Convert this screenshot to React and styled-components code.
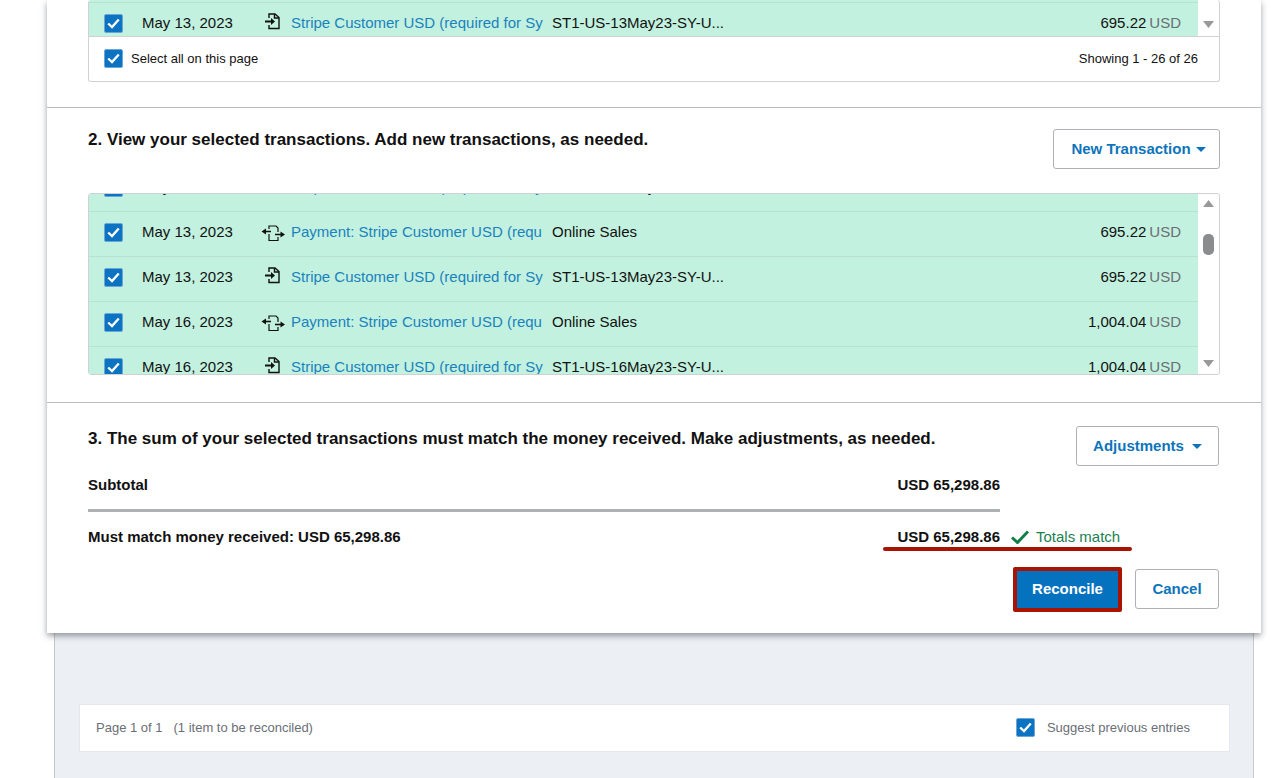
import React from "react";
import styled, { createGlobalStyle } from "styled-components";

const GlobalStyle = createGlobalStyle`
  html, body {
    margin: 0;
    height: 778px;
    overflow: hidden;
    background: #fff;
    font-family: "Liberation Sans", Arial, sans-serif;
    font-size: 15px;
    color: #111;
  }
`;

const Page = styled.div`
  position: relative;
  height: 778px;
  overflow: hidden;
`;

const BackPanel = styled.div`
  box-sizing: border-box;
  height: 778px;
  margin: 0 34px 0 54px;
  padding: 704px 23px 0 24px;
  background: #ecf0f5;
  border-left: 1px solid #c5c8cc;
  border-right: 1px solid #c5c8cc;
`;

const PagerCard = styled.div`
  box-sizing: border-box;
  height: 48px;
  display: flex;
  align-items: center;
  padding: 0 39px 2px 16px;
  background: #fff;
  border: 1px solid #e4e8ec;
  color: #6a6e75;
  font-size: 13px;
`;

const PagerCount = styled.span`
  margin-right: 11px;
`;

const SuggestLabel = styled.span`
  margin-left: auto;
  display: flex;
  align-items: center;
  gap: 12px;
`;

const Modal = styled.div`
  position: absolute;
  top: 0;
  left: 47px;
  width: 1214px;
  height: 633px;
  background: #fff;
  box-shadow: 0 3px 6px rgba(60, 66, 75, 0.5);
`;

const Section = styled.section`
  box-sizing: border-box;
  height: ${(p) => p.$height}px;
  padding: ${(p) => p.$padding};
  border-bottom: ${(p) => (p.$last ? "none" : "1px solid #b9bcc0")};
`;

const ListBox = styled.div`
  box-sizing: border-box;
  width: 1132px;
  height: ${(p) => p.$height}px;
  margin-top: ${(p) => p.$top || 0}px;
  border: 1px solid #cfd2d5;
  ${(p) => p.$open && "border-top: none;"}
  border-radius: 3px;
  overflow: hidden;
  background: #fff;
`;

const ListBody = styled.div`
  display: flex;
  height: ${(p) => p.$height}px;
  ${(p) => p.$ruled && "border-bottom: 1px solid #cfd2d5;"}
`;

const Rows = styled.div`
  flex: 1;
  min-width: 0;
  overflow: hidden;
  background: #c3f1df;
`;

const RowsInner = styled.div`
  margin-top: ${(p) => p.$shift}px;
  ${(p) => p.$ruled && "border-top: 1px solid #b9e1d2;"}
`;

const Row = styled.div`
  box-sizing: border-box;
  height: 45px;
  display: flex;
  padding: 11px 0 0 15px;
  border-bottom: 1px solid #b9e1d2;
  line-height: 17px;
`;

const DateCell = styled.span`
  width: 91px;
  margin-left: 19px;
  white-space: nowrap;
`;

const IconCell = styled.span`
  width: 58px;
  margin-top: ${(p) => p.$nudge}px;
  padding-left: ${(p) => p.$indent}px;
  box-sizing: border-box;
  display: flex;
  align-items: center;
  height: 17px;
  margin-bottom: ${(p) => -p.$nudge}px;
`;

const TypeLink = styled.span`
  width: 252px;
  overflow: hidden;
  white-space: nowrap;
  color: #1a82bd;
`;

const RefCell = styled.span`
  margin-left: 9px;
  width: 180px;
  white-space: nowrap;
  overflow: hidden;
`;

const Amount = styled.span`
  margin-left: auto;
  padding-right: 17px;
  white-space: nowrap;
`;

const Currency = styled.span`
  margin-left: 3px;
  color: #6a6e75;
`;

const ScrollTrack = styled.div`
  width: 21px;
  flex: none;
  display: flex;
  flex-direction: column;
  align-items: center;
  padding: ${(p) => (p.$short ? "0 0 8px" : "6px 0 7px")};
  justify-content: space-between;
  box-sizing: border-box;
  position: relative;
`;

const ScrollThumb = styled.div`
  position: absolute;
  top: 40px;
  left: 5px;
  width: 11px;
  height: 21px;
  border-radius: 5px;
  background: #8a8c8e;
`;

const ListFooter = styled.div`
  box-sizing: border-box;
  height: 44px;
  display: flex;
  align-items: center;
  justify-content: space-between;
  padding: 0 21px 2px 15px;
  font-size: 13px;
`;

const SelectAll = styled.span`
  display: flex;
  align-items: center;
  gap: 8px;
`;

const HeadRow = styled.div`
  display: flex;
  justify-content: space-between;
  align-items: flex-start;
`;

const Heading = styled.h2`
  margin: ${(p) => p.$top}px 0 0;
  font-size: 17px;
  line-height: 20px;
  font-weight: 700;
`;

const Button = styled.button`
  box-sizing: border-box;
  height: 40px;
  width: ${(p) => p.$width}px;
  display: flex;
  align-items: center;
  justify-content: center;
  gap: ${(p) => p.$gap || 0}px;
  padding: 0 0 2px ${(p) => p.$inset || 0}px;
  background: #fff;
  border: 1px solid #aeb1b5;
  border-radius: 3px;
  color: #0d74bb;
  font: 700 15px "Liberation Sans", Arial, sans-serif;
`;

const CancelButton = styled(Button)`
  margin-top: 2px;
`;

const Caret = styled.span`
  width: 0;
  height: 0;
  margin-top: 2px;
  border-left: 5px solid transparent;
  border-right: 5px solid transparent;
  border-top: 5px solid currentColor;
`;

const TotalRow = styled.div`
  width: 912px;
  display: flex;
  justify-content: space-between;
  font-weight: 700;
  line-height: 20px;
  ${(p) => p.$rule && "padding-bottom: 14px; border-bottom: 3px solid #aeb0b3;"}
  margin-top: ${(p) => p.$top}px;
  position: relative;
`;

const MatchNote = styled.span`
  position: absolute;
  left: 923px;
  top: 0;
  display: flex;
  align-items: center;
  gap: 7px;
  white-space: nowrap;
  font-weight: 400;
  color: #1b8051;
`;

const RedLine = styled.div`
  position: absolute;
  left: 836px;
  top: 547px;
  width: 249px;
  height: 4px;
  border-radius: 2px;
  background: #a81400;
`;

const Actions = styled.div`
  position: absolute;
  right: 42px;
  top: 567px;
  display: flex;
  align-items: flex-start;
  gap: 13px;
`;

const PrimaryButton = styled.button`
  box-sizing: border-box;
  width: 109px;
  height: 45px;
  padding: 0 0 2px;
  background: #0572c0;
  border: 4px solid #a81400;
  border-radius: 2px;
  color: #fff;
  font: 700 15px "Liberation Sans", Arial, sans-serif;
`;

const Box = styled.span`
  box-sizing: border-box;
  width: 19px;
  height: 19px;
  flex: none;
  display: inline-flex;
  align-items: center;
  justify-content: center;
  background: #0b73c1;
  border: 1px solid #6aa6d6;
  border-radius: 2px;
`;

const Check = () => (
  <Box>
    <svg width="13" height="11" viewBox="0 0 13 11" fill="none">
      <path d="M1.2 5.5 L5 9 L11.8 1.5" stroke="#fff" strokeWidth="2.3" />
    </svg>
  </Box>
);

const Triangle = ({ down }) => (
  <svg width="11" height="7" viewBox="0 0 11 7">
    <path d={down ? "M0 0 H11 L5.5 7 Z" : "M0 7 H11 L5.5 0 Z"} fill="#999" />
  </svg>
);

const DepositIcon = () => (
  <svg width="15" height="17" viewBox="0 0 15 17" fill="none" stroke="#111" strokeWidth="1.4">
    <path d="M4 5 V1 H10 L14 4.5 V15.5 H4 V12" />
    <path d="M9.5 1 V5 H14" />
    <path d="M0 8.5 H7" strokeWidth="2" />
    <path d="M6 5 L10 8.5 L6 12 Z" fill="#111" stroke="none" />
  </svg>
);

const PaymentIcon = () => (
  <svg width="24" height="17" viewBox="0 0 24 17" fill="none" stroke="#111" strokeWidth="1.2">
    <path d="M4 6.5 H10" strokeWidth="1.6" />
    <path d="M5 3.5 L0.5 6.5 L5 9.5 Z" fill="#111" stroke="none" />
    <path d="M8 4 V1 H15 L17 3 V7" />
    <path d="M8 9 V15.5 H17 V12" />
    <path d="M14 9.5 H21" strokeWidth="1.6" />
    <path d="M19.5 6.5 L24 9.5 L19.5 12.5 Z" fill="#111" stroke="none" />
  </svg>
);

const GreenTick = () => (
  <svg width="18" height="14" viewBox="0 0 18 14" fill="none">
    <path d="M1 7.5 L6.5 12.5 L17 1.5" stroke="#0f7f45" strokeWidth="3" />
  </svg>
);

const TxRow = ({ date, kind, link, reference, amount }) => (
  <Row>
    <Check />
    <DateCell>{date}</DateCell>
    <IconCell $indent={kind === "payment" ? 28 : 32} $nudge={kind === "payment" ? 2 : -1}>
      {kind === "payment" ? <PaymentIcon /> : <DepositIcon />}
    </IconCell>
    <TypeLink>{link}</TypeLink>
    <RefCell>{reference}</RefCell>
    <Amount>
      {amount}
      <Currency>USD</Currency>
    </Amount>
  </Row>
);

const STRIPE = "Stripe Customer USD (required for Sy";
const PAYMENT = "Payment: Stripe Customer USD (requ";

const selected = [
  { date: "May 12, 2023", kind: "deposit", link: STRIPE, reference: "ST1-US-12May23-SY-U...", amount: "512.18" },
  { date: "May 13, 2023", kind: "payment", link: PAYMENT, reference: "Online Sales", amount: "695.22" },
  { date: "May 13, 2023", kind: "deposit", link: STRIPE, reference: "ST1-US-13May23-SY-U...", amount: "695.22" },
  { date: "May 16, 2023", kind: "payment", link: PAYMENT, reference: "Online Sales", amount: "1,004.04" },
  { date: "May 16, 2023", kind: "deposit", link: STRIPE, reference: "ST1-US-16May23-SY-U...", amount: "1,004.04" },
];

export default function App() {
  return (
    <Page>
      <GlobalStyle />
      <BackPanel>
        <PagerCard>
          <PagerCount>Page 1 of 1</PagerCount>
          <span>(1 item to be reconciled)</span>
          <SuggestLabel>
            <Check />
            Suggest previous entries
          </SuggestLabel>
        </PagerCard>
      </BackPanel>

      <Modal>
        <Section $height={108} $padding="0 41px">
          <ListBox $open $height={82}>
            <ListBody $height={36} $ruled>
              <Rows>
                <RowsInner $shift={2} $ruled>
                  <TxRow
                    date="May 13, 2023"
                    kind="deposit"
                    link={STRIPE}
                    reference="ST1-US-13May23-SY-U..."
                    amount="695.22"
                  />
                </RowsInner>
              </Rows>
              <ScrollTrack $short>
                <span />
                <Triangle down />
              </ScrollTrack>
            </ListBody>
            <ListFooter>
              <SelectAll>
                <Check />
                Select all on this page
              </SelectAll>
              <span>Showing 1 - 26 of 26</span>
            </ListFooter>
          </ListBox>
        </Section>

        <Section $height={295} $padding="21px 41px 0">
          <HeadRow>
            <Heading $top={1}>2. View your selected transactions. Add new transactions, as needed.</Heading>
            <Button $width={167} $gap={5} $inset={4}>
              New Transaction
              <Caret />
            </Button>
          </HeadRow>
          <ListBox $top={24} $height={182}>
            <ListBody $height={180}>
              <Rows>
                <RowsInner $shift={-27}>
                  {selected.map((tx, i) => (
                    <TxRow key={i} {...tx} />
                  ))}
                </RowsInner>
              </Rows>
              <ScrollTrack>
                <Triangle />
                <ScrollThumb />
                <Triangle down />
              </ScrollTrack>
            </ListBody>
          </ListBox>
        </Section>

        <Section $height={230} $padding="23px 42px 0 41px" $last>
          <HeadRow>
            <Heading $top={3}>
              3. The sum of your selected transactions must match the money received. Make adjustments, as needed.
            </Heading>
            <Button $width={143} $gap={8}>
              Adjustments
              <Caret />
            </Button>
          </HeadRow>
          <TotalRow $rule $top={9}>
            <span>Subtotal</span>
            <span>USD 65,298.86</span>
          </TotalRow>
          <TotalRow $top={15}>
            <span>Must match money received: USD 65,298.86</span>
            <span>USD 65,298.86</span>
            <MatchNote>
              <GreenTick />
              Totals match
            </MatchNote>
          </TotalRow>
        </Section>

        <RedLine />
        <Actions>
          <PrimaryButton>Reconcile</PrimaryButton>
          <CancelButton $width={84}>Cancel</CancelButton>
        </Actions>
      </Modal>
    </Page>
  );
}
